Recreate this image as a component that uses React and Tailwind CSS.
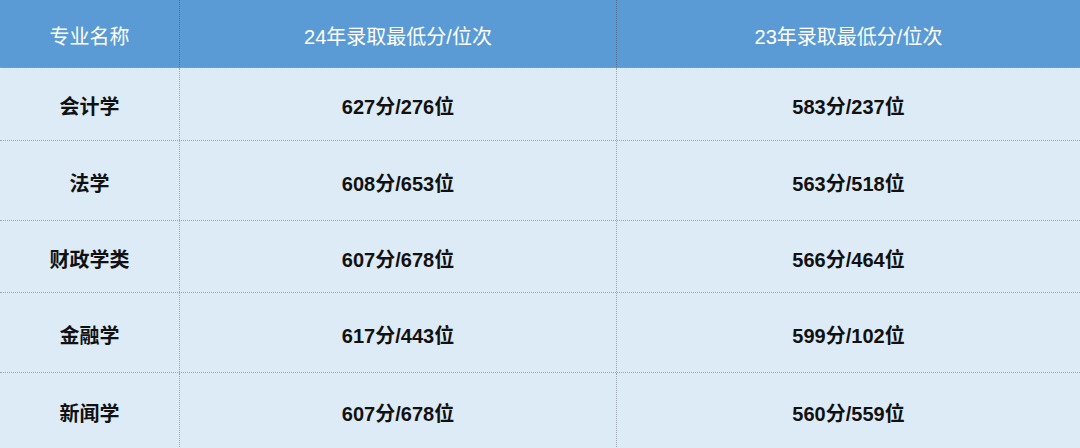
export default function App() {
  const rows = [
    ["会计学", "627分/276位", "583分/237位", "h-[73px]"],
    ["法学", "608分/653位", "563分/518位", "h-[80px]"],
    ["财政学类", "607分/678位", "566分/464位", "h-[72px]"],
    ["金融学", "617分/443位", "599分/102位", "h-[80px]"],
    ["新闻学", "607分/678位", "560分/559位", "h-[76px]"],
  ];
  const font = { fontFamily: '"Liberation Sans", "Noto Sans CJK SC", sans-serif' };
  return (
    <div className="w-[1080px] h-[448px] overflow-hidden bg-[#ddebf7]" style={font}>
      <div className="flex h-[68px] bg-[#5b9bd5] text-white text-[20px] border-b border-dotted border-[#8d9db0]">
        <div className="w-[180px] flex items-center justify-center pt-[7px] border-r border-dotted border-[#4f6f94]">专业名称</div>
        <div className="w-[437px] flex items-center justify-center pt-[7px] border-r border-dotted border-[#4f6f94]">24年录取最低分/位次</div>
        <div className="flex-1 flex items-center justify-center pt-[7px]">23年录取最低分/位次</div>
      </div>
      {rows.map(([a, b, c, h], i) => (
        <div key={i} className={`flex ${h} text-[20px] font-bold text-[#111] ${i < rows.length - 1 ? "border-b border-dotted border-[#9aa5b1]" : ""}`}>
          <div className="w-[180px] flex items-center justify-center pt-[6px] border-r border-dotted border-[#9aa5b1]">{a}</div>
          <div className="w-[437px] flex items-center justify-center pt-[6px] border-r border-dotted border-[#9aa5b1]">{b}</div>
          <div className="flex-1 flex items-center justify-center pt-[6px]">{c}</div>
        </div>
      ))}
    </div>
  );
}
